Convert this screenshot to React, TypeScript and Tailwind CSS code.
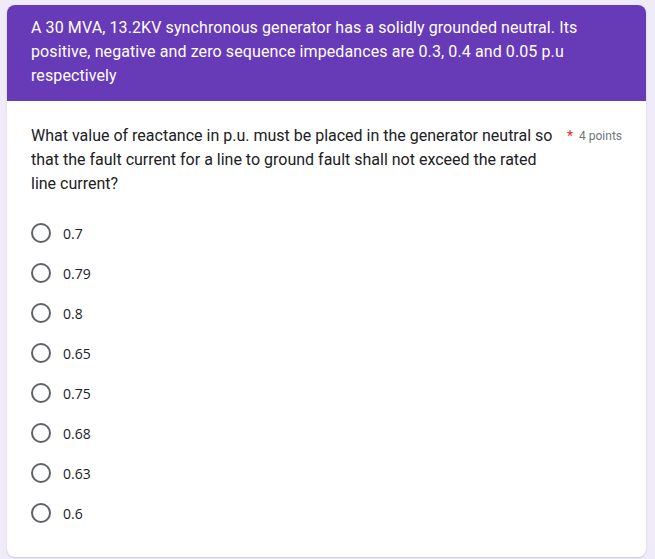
import React from "react";

const options = ["0.7", "0.79", "0.8", "0.65", "0.75", "0.68", "0.63", "0.6"];

function App() {
  return (
    <div className="min-h-screen bg-[#f0ebf8] pt-[5px] pl-[7px] pr-[9px] pb-[3px] font-['Roboto',sans-serif]">
      <div className="overflow-hidden rounded-lg bg-white shadow-[0_1px_2px_rgba(0,0,0,0.15)]">
        {/* section header */}
        <div className="bg-[#673ab7] pl-[24px] pr-[40px] pt-[11px] pb-[13px] text-[16px] leading-[24px] tracking-[0.1px] text-white">
          A 30 MVA, 13.2KV synchronous generator has a solidly grounded neutral. Its
          positive, negative and zero sequence impedances are 0.3, 0.4 and 0.05 p.u
          respectively
        </div>

        <div className="pl-[24px] pr-[24px] pt-[23px] pb-[24px]">
          <div className="flex items-start">
            <div className="w-[525px] text-[16px] leading-[24px] text-[#202124]">
              What value of reactance in p.u. must be placed in the generator neutral so
              that the fault current for a line to ground fault shall not exceed the rated
              line current?
            </div>
            <div className="ml-auto flex items-start pt-[2px] text-[12px] leading-[20px] text-[#70757a]">
              <span className="mr-[6px] text-[14px] text-[#d93025]">*</span>
              <span>4 points</span>
            </div>
          </div>

          <div className="mt-[17px] flex flex-col">
            {options.map((o) => (
              <div key={o} className="flex h-[40px] items-center">
                <div className="h-[20px] w-[20px] rounded-full border-2 border-[#5f6368]" />
                <span className="ml-[12px] text-[14px] text-[#202124] font-['Open_Sans',sans-serif]">{o}</span>
              </div>
            ))}
          </div>
        </div>
      </div>
    </div>
  );
}

export default App;
